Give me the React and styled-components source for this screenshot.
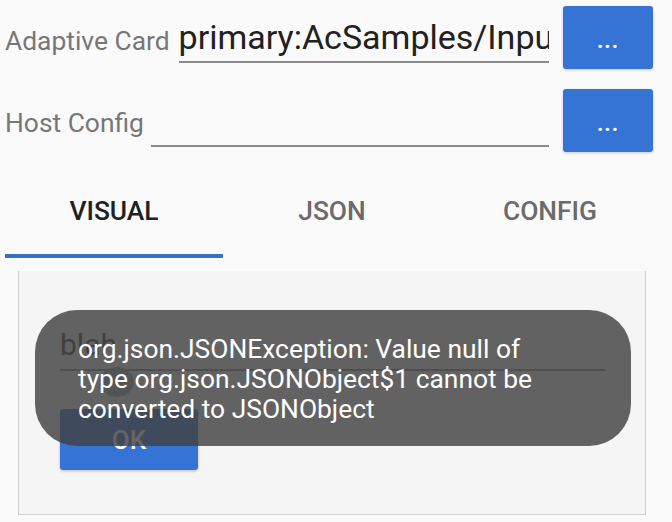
import React from "react";
import styled, { createGlobalStyle } from "styled-components";

const GlobalStyle = createGlobalStyle`
  *, *::before, *::after {
    box-sizing: border-box;
  }
  html, body {
    margin: 0;
    padding: 0;
    background: #fafafa;
  }
  body {
    font-family: Roboto, "Noto Sans", "Liberation Sans", sans-serif;
    width: 672px;
    height: 522px;
    overflow: hidden;
  }
`;

const Screen = styled.div`
  position: relative;
  display: flex;
  flex-direction: column;
  width: 672px;
  height: 522px;
  padding: 6px 19px 0 5px;
  & > * {
    flex-shrink: 0;
  }
`;

const FieldRow = styled.div`
  display: flex;
  align-items: stretch;
  height: 63px;
  margin-bottom: ${(p) => p.gap || 0}px;
`;

const Label = styled.span`
  align-self: center;
  margin-top: ${(p) => p.shift}px;
  font-size: 26.4px;
  color: #777777;
  white-space: nowrap;
`;

const InputField = styled.div`
  flex: 1;
  align-self: flex-end;
  margin: 0 14px ${(p) => p.bottom}px ${(p) => p.left}px;
  height: 46px;
  border-bottom: 2px solid #8a8a8a;
  font-size: 34px;
  line-height: 40px;
  color: #212121;
  white-space: nowrap;
  overflow: hidden;
`;

const BrowseButton = styled.button`
  width: 90px;
  border: none;
  border-radius: 3px;
  background: #3574d4;
  color: #fff;
  font-family: inherit;
  font-size: 22px;
  font-weight: 700;
  letter-spacing: 1px;
  padding: 6px 0 0;
  box-shadow: 0 1px 3px rgba(0, 0, 0, 0.2);
`;

const TabBar = styled.div`
  display: grid;
  grid-template-columns: repeat(3, 218px);
  margin-top: 19px;
`;

const Tab = styled.div`
  height: 87px;
  display: flex;
  align-items: center;
  justify-content: center;
  padding-bottom: 4px;
  font-size: 26.4px;
  font-weight: 500;
  color: ${(p) => (p.active ? "#212121" : "#6b6b6b")};
  border-bottom: 4px solid ${(p) => (p.active ? "#3a70c0" : "transparent")};
`;

const Panel = styled.div`
  margin: 13px 7px 0 13px;
  height: 244px;
  background: #f5f5f5;
  border: 1px solid #cfcfcf;
  border-top: none;
  padding: 52px 40px 0 41px;
  display: flex;
  flex-direction: column;
`;

const CardInput = styled.div`
  height: 48px;
  border-bottom: 2px solid #8a8a8a;
  font-size: 30px;
  line-height: 44px;
  color: #3a3a3a;
`;

const Knob = styled.div`
  width: 34px;
  height: 30px;
  border-radius: 50%;
  background: #9aa4ad;
  margin: -4px 0 0 40px;
`;

const OkButton = styled.button`
  width: 138px;
  height: 61px;
  margin-top: 12px;
  border: none;
  border-radius: 3px;
  background: #3574d4;
  color: #fff;
  font-family: inherit;
  font-size: 26px;
  font-weight: 500;
  box-shadow: 0 1px 3px rgba(0, 0, 0, 0.25);
`;

const Toast = styled.div`
  position: absolute;
  left: 35px;
  top: 310px;
  width: 596px;
  height: 136px;
  padding: 24px 20px 0 43px;
  border-radius: 42px;
  background: rgba(66, 66, 66, 0.82);
  color: #ffffff;
  font-size: 26.4px;
  line-height: 30px;
`;

const ToastLine = styled.span`
  display: block;
  white-space: nowrap;
`;

export default function App() {
  return (
    <>
      <GlobalStyle />
      <Screen>
        <FieldRow gap={20}>
          <Label shift={6}>Adaptive Card</Label>
          <InputField left={9} bottom={6}>primary:AcSamples/Input.Text.json</InputField>
          <BrowseButton>...</BrowseButton>
        </FieldRow>
        <FieldRow>
          <Label shift={4}>Host Config</Label>
          <InputField left={7} bottom={5} />
          <BrowseButton>...</BrowseButton>
        </FieldRow>
        <TabBar>
          <Tab active>VISUAL</Tab>
          <Tab>JSON</Tab>
          <Tab>CONFIG</Tab>
        </TabBar>
        <Panel>
          <CardInput>blah</CardInput>
          <Knob />
          <OkButton>OK</OkButton>
        </Panel>
        <Toast>
          <ToastLine>org.json.JSONException: Value null of</ToastLine>
          <ToastLine>type org.json.JSONObject$1 cannot be</ToastLine>
          <ToastLine>converted to JSONObject</ToastLine>
        </Toast>
      </Screen>
    </>
  );
}
